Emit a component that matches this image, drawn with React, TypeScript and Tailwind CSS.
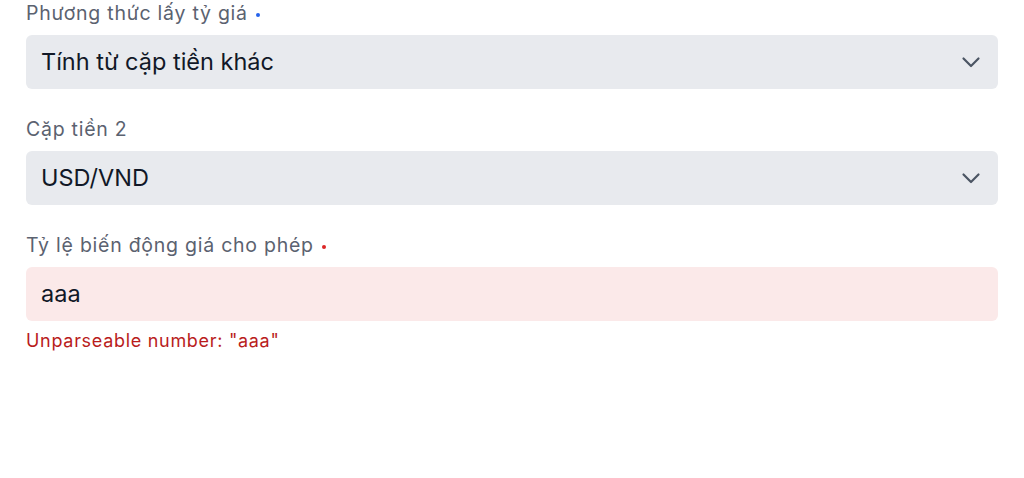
import React from "react";

interface FieldProps {
  label: string;
  dot?: "blue" | "red";
  children: React.ReactNode;
  error?: string;
}

function Field({ label, dot, children, error }: FieldProps) {
  return (
    <div className="flex flex-col">
      <div className="flex items-center h-[26px] text-[19.5px] tracking-[0.75px] text-[#5b6270]">
        <span>{label}</span>
        {dot && (
          <span
            className={`ml-[8px] mt-[2px] inline-block h-[4px] w-[4px] rounded-full ${
              dot === "blue" ? "bg-[#2563eb]" : "bg-[#dc2626]"
            }`}
          />
        )}
      </div>
      <div className="mt-[8px]">{children}</div>
      {error && (
        <p className="mt-[8px] h-[24px] text-[18px] leading-[24px] tracking-[0.7px] text-[#b91c1c]">{error}</p>
      )}
    </div>
  );
}

function SelectBox({ value }: { value: string }) {
  return (
    <div className="flex h-[54px] items-center justify-between rounded-md bg-[#e8eaee] pl-[15px] pr-[17px]">
      <span className="text-[23.5px] text-[#111827]">{value}</span>
      <svg width="20" height="12" viewBox="0 0 20 12" fill="none">
        <path d="M2.5 2.5l7.5 7.5 7.5-7.5" stroke="#4b5563" strokeWidth="2.2" strokeLinecap="round" strokeLinejoin="round" />
      </svg>
    </div>
  );
}

export default function App() {
  return (
    <div
      className="h-[478px] w-[1024px] bg-white px-[26px] pt-[1px]"
      style={{ fontFamily: "Inter, 'Noto Sans', sans-serif" }}
    >
      <div className="flex flex-col gap-[28px]">
        <Field label="Phương thức lấy tỷ giá" dot="blue">
          <SelectBox value="Tính từ cặp tiền khác" />
        </Field>
        <Field label="Cặp tiền 2">
          <SelectBox value="USD/VND" />
        </Field>
        <Field label="Tỷ lệ biến động giá cho phép" dot="red" error={'Unparseable number: "aaa"'}>
          <div className="flex h-[54px] items-center rounded-md bg-[#fbe9e9] px-[15px]">
            <span className="text-[23.5px] text-[#111827]">aaa</span>
          </div>
        </Field>
      </div>
    </div>
  );
}
